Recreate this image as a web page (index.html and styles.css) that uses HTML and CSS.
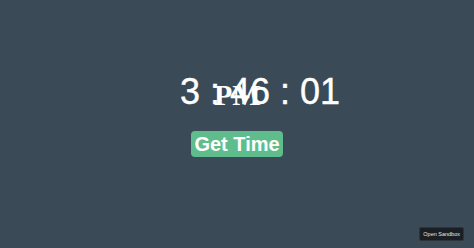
FILE: index.html
```html
<!DOCTYPE html>
<html>
<head>
<meta charset="utf-8">
<link rel="stylesheet" href="styles.css">
</head>
<body>
<main class="app">
  <div class="clock-row">
    <div class="clock">
      <span class="time">3 : 46 : 01</span>
      <span class="ampm">PM</span>
    </div>
  </div>
  <button class="get-time">Get Time</button>
</main>
<a class="sandbox">Open Sandbox</a>
</body>
</html>
```
FILE: styles.css
```css
html, body {
  margin: 0;
  padding: 0;
  height: 100%;
}
body {
  background: #3a4a56;
  overflow: hidden;
  position: relative;
}
.app {
  display: flex;
  flex-direction: column;
  align-items: center;
  padding-top: 74px;
}
.clock-row {
  display: flex;
  justify-content: center;
  padding-left: 46px;
}
.clock {
  position: relative;
}
.time {
  display: block;
  font-family: "Liberation Sans", Arial, sans-serif;
  font-size: 36px;
  line-height: 36px;
  white-space: nowrap;
  color: #ffffff;
  -webkit-text-stroke: 0.4px #ffffff;
}
.ampm {
  position: absolute;
  left: 34px;
  top: 6px;
  font-family: "Liberation Serif", serif;
  font-weight: bold;
  font-size: 30px;
  line-height: 30px;
  color: #ffffff;
}
.get-time {
  margin-top: 21px;
  font-family: "Liberation Sans", Arial, sans-serif;
  font-weight: bold;
  font-size: 20px;
  line-height: 22px;
  color: #ffffff;
  background: #5fbd8d;
  border: none;
  border-radius: 4px;
  padding: 2px 3px;
}
.sandbox {
  position: absolute;
  right: 10px;
  bottom: 7px;
  background: #1b1f23;
  border: 1px solid #2e3438;
  border-radius: 2px;
  color: #e8e8e8;
  font-family: "Liberation Sans", Arial, sans-serif;
  font-size: 5.5px;
  line-height: 12px;
  padding: 0 3px;
}
```
